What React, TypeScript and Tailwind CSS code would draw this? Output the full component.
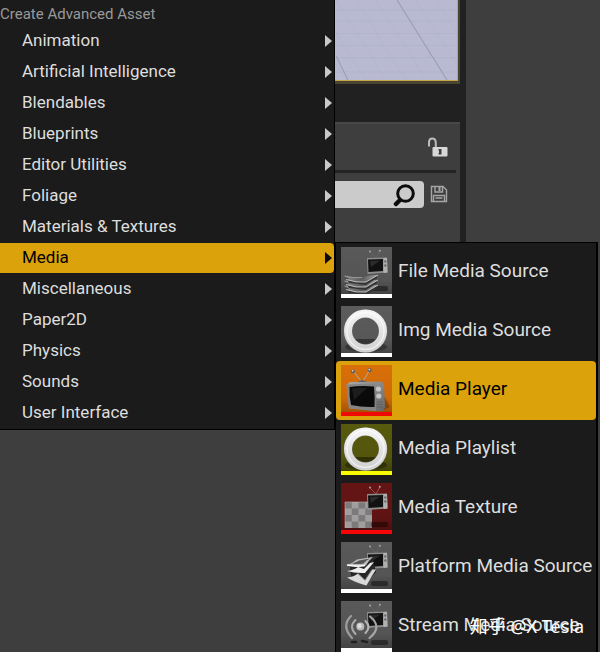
import type { ReactNode } from "react";

const CATEGORIES = [
  "Animation",
  "Artificial Intelligence",
  "Blendables",
  "Blueprints",
  "Editor Utilities",
  "Foliage",
  "Materials & Textures",
  "Media",
  "Miscellaneous",
  "Paper2D",
  "Physics",
  "Sounds",
  "User Interface",
];

function Thumb({ bg, bar, children }: { bg: string; bar: string; children: ReactNode }) {
  return (
    <svg viewBox="0 0 51 51" className="size-[51px] shrink-0" aria-hidden="true">
      <defs>
        <linearGradient id="metal" x1="0" y1="0" x2="1" y2="1">
          <stop offset="0" stopColor="#a9a9a9" />
          <stop offset="1" stopColor="#666" />
        </linearGradient>
        <linearGradient id="ring" x1="0" y1="0" x2="0" y2="1">
          <stop offset="0" stopColor="#f4f4f4" />
          <stop offset="1" stopColor="#d2d2d2" />
        </linearGradient>
        <linearGradient id="sheet" x1="0" y1="0" x2="1" y2="0">
          <stop offset="0" stopColor="#8c8c8c" />
          <stop offset="0.5" stopColor="#5c5c5c" />
          <stop offset="1" stopColor="#a0a0a0" />
        </linearGradient>
        <linearGradient id="shade" x1="0" y1="0" x2="0" y2="1">
          <stop offset="0" stopColor="#000" stopOpacity="0" />
          <stop offset="0.7" stopColor="#000" stopOpacity="0.05" />
          <stop offset="1" stopColor="#000" stopOpacity="0.25" />
        </linearGradient>
      </defs>
      <rect width="51" height="51" fill={bg} />
      <rect width="51" height="47" fill="url(#shade)" />
      {children}
      <rect y="47" width="51" height="4" fill={bar} />
    </svg>
  );
}

function SmallTv({ antenna = "#666" }: { antenna?: string }) {
  return (
    <g>
      <rect x="30" y="39" width="17" height="5" rx="2" fill="#000" opacity="0.4" />
      <path d="M29 5 35 11 39 4" fill="none" stroke={antenna} strokeWidth="0.8" />
      <circle cx="29" cy="4.500" r="1" fill="#a5a5a5" />
      <circle cx="38.800" cy="3.800" r="1" fill="#a5a5a5" />
      <path d="M26 11 46 10.500 46.500 25.500 26.500 27Z" fill="#8e8e8e" />
      <path d="M42.500 11H46l.5 14.500-4 .5Z" fill="#b0b0b0" />
      <path d="M27 12.500 42 12 42 24 27.500 25Z" fill="#111" />
      <path d="M29 14 39 13.500 30 20Z" fill="#2b2b2b" />
      <circle cx="44.300" cy="14.500" r="1.200" fill="#6d6d6d" />
      <circle cx="44.300" cy="18.500" r="1.200" fill="#6d6d6d" />
    </g>
  );
}

function BigTv() {
  return (
    <g>
      <path d="M8 42 40 46 49 42 44 32 10 34Z" fill="#000" opacity="0.25" />
      <path d="M12.500 6.500 20 16M28.500 5.500 22 16" fill="none" stroke="#b7a18c" strokeWidth="1.1" />
      <circle cx="12" cy="6.500" r="2.100" fill="#6d6258" />
      <circle cx="11.600" cy="5.800" r="0.8" fill="#eee" />
      <circle cx="28.700" cy="5.200" r="2.100" fill="#6d6258" />
      <circle cx="28.300" cy="4.600" r="0.8" fill="#eee" />
      <path d="M16 17.500q5-4 10-.5Z" fill="#555" />
      <path d="M5.500 20 9 17 40 16.500 43 19 44 43 41 46.500 8 43.500Z" fill="url(#metal)" />
      <path d="M5.500 19.500 34 18.500 35 46 8 43.500Z" fill="#858585" />
      <path d="M8.500 22Q20 20.500 33 21.500 34 32 33.500 42 21 42.500 10 40 8 31 8.500 22Z" fill="#0a0a0a" />
      <path d="M11 23.500q8-1 15-.5L13 35Z" fill="#1d1d1d" />
      <circle cx="37.500" cy="24" r="2.600" fill="#c5c5c5" />
      <circle cx="37.800" cy="31" r="2.600" fill="#c5c5c5" />
      <path d="M35.500 37h6M35.500 39.500h6M36 42h6" stroke="#5d5d5d" strokeWidth="0.8" />
    </g>
  );
}

function Ring({ shadow }: { shadow: string }) {
  return (
    <g>
      <ellipse cx="25" cy="41" rx="21" ry="5" fill={shadow} />
      <path d="M14 33h22l-2 4H16Z" fill={shadow} />
      <circle cx="24.500" cy="25" r="17.500" fill="none" stroke="#777" strokeOpacity="0.5" strokeWidth="9" />
      <circle cx="24.500" cy="25" r="17.500" fill="none" stroke="url(#ring)" strokeWidth="8" />
      <circle cx="24.500" cy="25" r="18.500" fill="none" stroke="#fff" strokeOpacity="0.6" strokeWidth="1.500" />
    </g>
  );
}

function Papers() {
  return (
    <g>
      <path d="M6 41 27 46 38 41 30 36Z" fill="#2b2b2b" opacity="0.6" />
      {[10, 5, 0].map((dy) => (
        <g key={dy} transform={`translate(0 ${dy})`}>
          <path d="M5 31 25 34 36 28 36 31 25 38 8 36Z" fill="#333" />
          <path d="M3.500 29Q13 31.500 21 30.500 28 27.500 37 28L25 35Q15 36 5 32.500L8 32Z" fill="url(#sheet)" />
          <path d="M5 32.500Q15 36 25 35L37 28" fill="none" stroke="#bdbdbd" strokeWidth="1" />
          <path d="M3.500 29Q13 31.500 21 30.500" fill="none" stroke="#aaa" strokeWidth="0.8" />
        </g>
      ))}
    </g>
  );
}

function Platforms() {
  return (
    <g>
      <path d="M9 23 32 16 35 30 25 41 10 35Z" fill="#262626" />
      <path d="M6 35.500Q13 35 17 31.500L24 38.500 31 27.500 35 27.500Q30 35 25.500 43.500 15 41 6 35.500Z" fill="#d9d9d9" />
      <path d="M17 31.500 24 38 31 27.500" fill="none" stroke="#777" strokeWidth="1" />
      <path d="M6 29Q13 28 17 25L23 27 29 21 33 20Q28 26 24 31 14 31.500 6 29Z" fill="#eee" />
      <path d="M6 23Q12 21 16 17.500 24 16 32 15 28 18 25 23.500 14 25.500 6 23Z" fill="#bbb" />
      <path d="M11 21.500Q16 20 18 18.500L29 16.500Q25 18.500 22.500 21.500 17 22.500 11 21.500Z" fill="#555" />
      <path d="M6 23Q14 25 24 23.500" fill="none" stroke="#fff" strokeWidth="1.500" />
    </g>
  );
}

function Broadcast() {
  return (
    <g fill="none" strokeLinecap="round">
      <path d="M11 41h4M21 40l5 1" stroke="#222" strokeWidth="2.500" />
      <path d="M10 15Q0 25 11 37" stroke="#9d9d9d" strokeWidth="2.200" />
      <path d="M14.500 19Q7.500 25.500 14.500 33" stroke="#aaa" strokeWidth="2" />
      <path d="M24.500 20Q30.500 26 24.500 32" stroke="#b5b5b5" strokeWidth="2" />
      <path d="M29 15.500Q42 26 28.500 37" stroke="#a5a5a5" strokeWidth="2.200" />
      <circle cx="19.300" cy="25.500" r="4" fill="#b9b9b9" />
      <circle cx="18.500" cy="24.800" r="2.200" fill="#dedede" />
    </g>
  );
}

function Checkerboard() {
  const cells = Array.from({ length: 16 }, (_, i) => i);
  return (
    <g>
      <rect x="4" y="19" width="27" height="26" fill="#a09e9e" />
      {cells
        .filter((i) => (i + Math.floor(i / 4)) % 2 === 0)
        .map((i) => (
          <rect
            key={i}
            x={4 + (i % 4) * 6.75}
            y={19 + Math.floor(i / 4) * 6.5}
            width="6.75"
            height="6.5"
            fill="#7d7a7a"
          />
        ))}
      <path d="M4 45V19h27" fill="none" stroke="#b9b4b4" strokeWidth="0.6" />
    </g>
  );
}

const MEDIA_ASSETS = [
  { name: "File Media Source", bg: "#595959", bar: "#fff", art: <><SmallTv /><Papers /></> },
  { name: "Img Media Source", bg: "#5c5c5c", bar: "#fff", art: <Ring shadow="#353535" /> },
  { name: "Media Player", bg: "#d96f08", bar: "#f00a05", art: <BigTv /> },
  { name: "Media Playlist", bg: "#575a0c", bar: "#fafa00", art: <Ring shadow="#303206" /> },
  { name: "Media Texture", bg: "#651414", bar: "#f60606", art: <><Checkerboard /><SmallTv antenna="#a06060" /></> },
  { name: "Platform Media Source", bg: "#595959", bar: "#fff", art: <><SmallTv /><Platforms /></> },
  { name: "Stream Media Source", bg: "#595959", bar: "#fff", art: <><SmallTv /><Broadcast /></> },
];

function Viewport() {
  return (
    <div className="mr-[6px] h-[84px] border-r-2 border-b-3 border-[#49442f]">
      <div className="h-full border-r border-b border-[#c4a548] bg-[#b9bad2]">
        <svg className="ml-auto block h-full w-[121px]" viewBox="0 0 121 79" preserveAspectRatio="none" aria-hidden="true">
          {[10, 21, 33, 45, 57, 71].map((y) => (
            <path key={y} d={`M0 ${y}H121`} stroke="#a9abc5" strokeWidth="1" opacity="0.4" />
          ))}
          {[-40, -20, 0, 20, 40, 80, 100].map((x) => (
            <path key={x} d={`M${x} 0l50 79`} stroke="#adafc9" strokeWidth="1" opacity="0.3" />
          ))}
          <path d="M61 0 111 79M0 55 12 79" stroke="#9d9fb6" strokeWidth="1.2" />
        </svg>
      </div>
    </div>
  );
}

function DetailsPanel() {
  return (
    <section className="mt-[38px] mr-[6px] flex-1 border-t-2 border-[#484848] bg-[#3e3e3e]">
      <div className="mr-1 flex h-[49px] items-center justify-end border-b-3 border-[#232323] pr-2">
        <button type="button" aria-label="Unlock">
          <svg viewBox="0 0 21 20" className="h-5 w-[21px]" aria-hidden="true">
            <path d="M2 9.500V5.500Q2 1.500 5.300 1.500T8.800 5.500V10" fill="none" stroke="#bdbdbd" strokeWidth="2" />
            <rect x="5.500" y="10" width="15" height="9.500" rx="1" fill="#d8d8d8" />
            <path d="M11.500 12h3v5.500h-3V16h.5v-2.500h-.5Z" fill="#3e3e3e" />
          </svg>
        </button>
      </div>
      <div className="mt-2 flex items-start gap-[6px]">
        <label className="flex h-[27px] w-[424px] items-center rounded-r-sm bg-[#cbcbcb] pr-2">
          <input type="text" aria-label="Search details" className="min-w-0 flex-1 bg-transparent outline-none" />
          <svg viewBox="0 0 24 24" className="size-6" fill="none" stroke="#0c0c0c" aria-hidden="true">
            <circle cx="13.500" cy="10.500" r="7.800" strokeWidth="3" />
            <path d="M7.500 17.500 4 21" strokeWidth="4.500" strokeLinecap="round" />
          </svg>
        </label>
        <button type="button" aria-label="Save" className="pt-1">
          <svg viewBox="0 0 18 18" className="size-[18px]" fill="none" stroke="#a6a6a6" strokeWidth="1.400" aria-hidden="true">
            <path d="M1.500 1.500H13L16.500 5V16.500H1.500Z" />
            <path d="M5 1.500V7h7.500V1.500M3.500 16.500V10.500H14.500V16.500M5.500 13h7" />
            <path d="M9.500 2v4" strokeWidth="2" />
          </svg>
        </button>
      </div>
    </section>
  );
}

function CategoryMenu() {
  return (
    <div className="w-[335px] self-start border-r border-b border-black bg-[#1b1b1b]" role="menu">
      <h2 className="h-[26px] text-[15px] leading-[28px] text-[#999]">Create Advanced Asset</h2>
      {CATEGORIES.map((name) => {
        const open = name === "Media";
        return (
          <button
            key={name}
            type="button"
            role="menuitem"
            className={`mb-px flex h-[30px] w-full items-center justify-between pr-[2px] pl-[22px] text-[17px] ${
              open ? "rounded-r-sm bg-[#dca20b] text-black" : "text-[#dedede]"
            }`}
          >
            {name}
            <svg viewBox="0 0 7 12" className="h-3 w-[7px]" aria-hidden="true">
              <path d="M0 0 7 6 0 12Z" fill={open ? "#0b0b0b" : "#c9c9c9"} />
            </svg>
          </button>
        );
      })}
    </div>
  );
}

function MediaMenu() {
  return (
    <div
      className="mt-[242px] w-[263px] self-start border border-r-2 border-black bg-[#1b1b1b]"
      role="menu"
    >
      {MEDIA_ASSETS.map((asset) => (
        <button
          key={asset.name}
          type="button"
          role="menuitem"
          className={`flex h-[59px] w-full items-center gap-[6px] pl-[5px] text-[19px] whitespace-nowrap ${
            asset.name === "Media Player" ? "rounded-sm bg-[#dca20b] text-black" : "text-[#dedede]"
          }`}
        >
          <Thumb bg={asset.bg} bar={asset.bar}>
            {asset.art}
          </Thumb>
          <span className="pb-[3px]">{asset.name}</span>
        </button>
      ))}
    </div>
  );
}

export default function App() {
  return (
    <div className="relative flex h-screen overflow-hidden bg-[#3e3e3e] font-['Roboto','Liberation_Sans',sans-serif]">
      <main className="flex w-[466px] shrink-0 flex-col bg-[#212121]">
        <Viewport />
        <DetailsPanel />
      </main>
      <div className="absolute top-0 left-0 flex">
        <CategoryMenu />
        <MediaMenu />
      </div>
      <span className="absolute right-4 bottom-3 font-['Noto_Sans','Noto_Sans_CJK_SC',sans-serif] text-lg text-white">
        知乎 @X Tesla
      </span>
    </div>
  );
}
